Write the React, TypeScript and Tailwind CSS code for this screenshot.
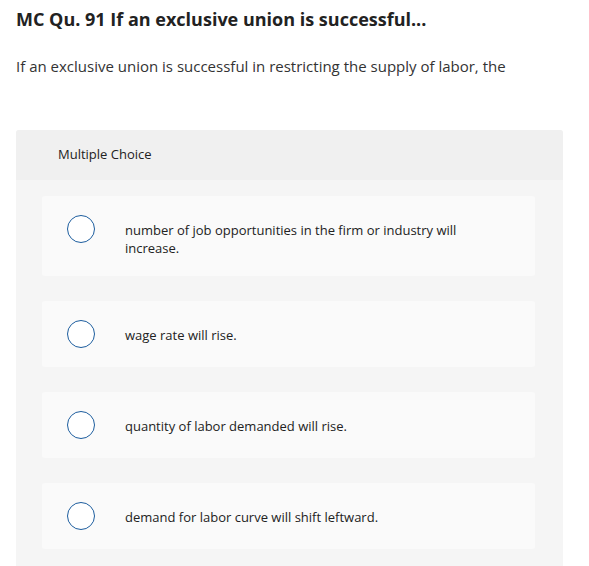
const choices = [
  "number of job opportunities in the firm or industry will increase.",
  "wage rate will rise.",
  "quantity of labor demanded will rise.",
  "demand for labor curve will shift leftward.",
];

export default function App() {
  return (
    <div className="min-h-[566px] bg-white pl-4 pr-[26px] pt-[7px] font-['Open_Sans','Lato',sans-serif] text-[#333]">
      <h1 className="text-[18px] font-bold leading-[24px] text-[#222]">
        MC Qu. 91 If an exclusive union is successful...
      </h1>
      <p className="mt-[25px] text-[15px] leading-[20px] text-[#333]">
        If an exclusive union is successful in restricting the supply of labor, the
      </p>

      <section className="mt-[54px] overflow-hidden rounded-t-[3px] bg-[#f5f5f5]">
        <div className="flex h-[50px] items-center bg-[#f0f0f0] pl-[42px] text-[13px] text-[#222]">
          Multiple Choice
        </div>
        <div className="flex flex-col gap-[25px] pl-[26px] pr-[28px] pt-4 pb-[17px]">
          {choices.map((choice) => (
            <label
              key={choice}
              className="flex items-start rounded-[3px] bg-[#fafafa] py-[19px] pl-[25px] pr-6"
            >
              <span className="h-[28px] w-[28px] shrink-0 rounded-full border-[1.5px] border-[#1c5d9e] bg-white" />
              <span className="ml-[30px] mt-[6px] max-w-[340px] text-[13px] leading-[18px] text-[#222]">
                {choice}
              </span>
            </label>
          ))}
        </div>
      </section>
    </div>
  );
}
